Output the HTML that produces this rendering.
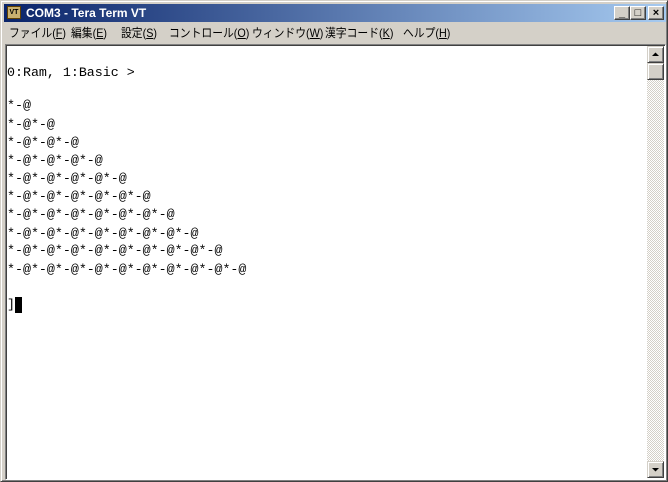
<!DOCTYPE html><html><head><meta charset="utf-8"><style>
*{margin:0;padding:0;box-sizing:border-box}
body{width:668px;height:482px;background:#d4d0c8;position:relative;overflow:hidden;font-family:"Liberation Sans","Noto Sans CJK JP",sans-serif}
.win{position:absolute;left:0;top:0;width:668px;height:482px;border:1px solid;border-color:#d4d0c8 #404040 #404040 #d4d0c8;box-shadow:inset 1px 1px #fff,inset -1px -1px #808080}
.title{position:absolute;left:3px;top:3px;width:662px;height:18px;background:linear-gradient(90deg,#0a246a,#a6caf0);color:#fff;font-weight:bold;font-size:12px;line-height:18px;padding-left:22px}
.ico{position:absolute;left:3px;top:2px;width:14px;height:13px;background:#c8b070;border:1px solid #604000;font-size:7px;line-height:11px;color:#000;text-align:center;font-weight:bold}
.tb{position:absolute;top:2px;width:16px;height:14px;background:#d4d0c8;border:1px solid;border-color:#fff #404040 #404040 #fff;box-shadow:inset -1px -1px #808080;color:#000;font-size:11px;line-height:12px;text-align:center;font-weight:bold}
.menu span{position:absolute;top:22px;height:20px;font-size:12px;line-height:20px;color:#000;white-space:nowrap;transform:scaleX(0.9);transform-origin:0 0}
.client{position:absolute;left:4px;top:43px;width:661px;height:436px;border:1px solid;border-color:#808080 #fff #fff #808080;box-shadow:inset 1px 1px #404040;background:#fff}
.t{position:absolute;left:6px;font-family:"Liberation Mono","DejaVu Sans Mono",monospace;font-size:13.3px;color:#000;white-space:pre;line-height:16px}
.sb{position:absolute;left:646px;top:45px;width:17px;height:432px;background-color:#eeeae4;background-image:repeating-conic-gradient(#d4d0c8 0 25%,#fff 0 50%);background-size:2px 2px}
.btn{position:absolute;left:0;width:17px;height:17px;background:#d4d0c8;border:1px solid;border-color:#d4d0c8 #404040 #404040 #d4d0c8;box-shadow:inset 1px 1px #fff,inset -1px -1px #808080}
</style></head><body><div class="win">
<div class="title"><div class="ico">VT</div>COM3 - Tera Term VT
<div class="tb" style="left:610px">_</div><div class="tb" style="left:626px">□</div><div class="tb" style="left:644px">×</div></div>
<div class="menu"><span style="left:8px">ファイル(<u>F</u>)</span><span style="left:70px">編集(<u>E</u>)</span><span style="left:120px">設定(<u>S</u>)</span><span style="left:168px">コントロール(<u>O</u>)</span><span style="left:251px">ウィンドウ(<u>W</u>)</span><span style="left:324px">漢字コード(<u>K</u>)</span><span style="left:402px">ヘルプ(<u>H</u>)</span></div>
<div class="client"></div>
<div class="t" style="top:64px">0:Ram, 1:Basic &gt;</div>
<div class="t" style="top:97px">*-@</div>
<div class="t" style="top:116px">*-@*-@</div>
<div class="t" style="top:134px">*-@*-@*-@</div>
<div class="t" style="top:152px">*-@*-@*-@*-@</div>
<div class="t" style="top:170px">*-@*-@*-@*-@*-@</div>
<div class="t" style="top:188px">*-@*-@*-@*-@*-@*-@</div>
<div class="t" style="top:206px">*-@*-@*-@*-@*-@*-@*-@</div>
<div class="t" style="top:225px">*-@*-@*-@*-@*-@*-@*-@*-@</div>
<div class="t" style="top:242px">*-@*-@*-@*-@*-@*-@*-@*-@*-@</div>
<div class="t" style="top:261px">*-@*-@*-@*-@*-@*-@*-@*-@*-@*-@</div>
<div class="t" style="top:296px">]<span style="background:#000;display:inline-block;width:7px;height:16px;vertical-align:top"></span></div>
<div class="sb">
<div class="btn" style="top:0"><svg width="15" height="15" style="position:absolute;left:0;top:0"><path d="M4 9h7L7.5 5.5z" fill="#000"/></svg></div>
<div class="btn" style="top:17px"></div>
<div class="btn" style="top:415px"><svg width="15" height="15" style="position:absolute;left:0;top:0"><path d="M4 6h7L7.5 9.5z" fill="#000"/></svg></div>
</div>
</div></body></html>
